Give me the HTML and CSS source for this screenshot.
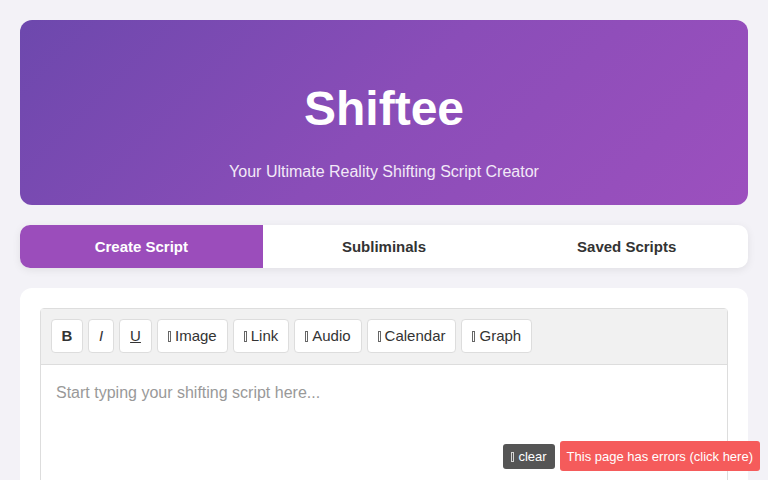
FILE: index.html
```html
<!DOCTYPE html>
<html>
<head>
<meta charset="utf-8">
<link rel="stylesheet" href="styles.css">
</head>
<body>
<div class="page">
  <header class="hero">
    <h1 class="title">Shiftee</h1>
    <p class="subtitle">Your Ultimate Reality Shifting Script Creator</p>
  </header>
  <nav class="tabs">
    <div class="tab active">Create Script</div>
    <div class="tab">Subliminals</div>
    <div class="tab">Saved Scripts</div>
  </nav>
  <section class="card">
    <div class="editor">
      <div class="toolbar">
        <button class="tb b">B</button>
        <button class="tb i">I</button>
        <button class="tb u">U</button>
        <button class="tb"><span class="ico"></span>Image</button>
        <button class="tb"><span class="ico"></span>Link</button>
        <button class="tb"><span class="ico"></span>Audio</button>
        <button class="tb"><span class="ico"></span>Calendar</button>
        <button class="tb"><span class="ico"></span>Graph</button>
      </div>
      <div class="content">Start typing your shifting script here...</div>
    </div>
  </section>
</div>
<div class="overlay">
  <button class="clear"><span class="ico small"></span>clear</button>
  <button class="errors">This page has errors (click here)</button>
</div>
</body>
</html>
```
FILE: styles.css
```css
* { box-sizing: border-box; }
html, body { margin: 0; padding: 0; }
body {
  background: #f3f2f7;
  font-family: "Liberation Sans", Arial, sans-serif;
  color: #333;
  overflow: hidden;
}
.page {
  padding: 20px;
  display: flex;
  flex-direction: column;
  gap: 20px;
}
.hero {
  height: 185px;
  border-radius: 12px;
  background: linear-gradient(135deg, #6d48ad 0%, #8a4db8 50%, #9c50be 100%);
  color: #fff;
  text-align: center;
  padding-top: 61px;
}
.title {
  margin: 0;
  font-size: 48px;
  line-height: 56px;
  font-weight: bold;
}
.subtitle {
  margin: 25px 0 0;
  font-size: 16px;
  line-height: 20px;
  color: #f2e9f7;
}
.tabs {
  display: grid;
  grid-template-columns: 1fr 1fr 1fr;
  height: 43px;
  background: #fff;
  border-radius: 10px;
  overflow: hidden;
  box-shadow: 0 2px 8px rgba(0,0,0,0.08);
}
.tab {
  display: flex;
  align-items: center;
  justify-content: center;
  font-weight: bold;
  font-size: 15px;
  color: #333;
}
.tab.active {
  background: #9b4dbb;
  color: #fff;
}
.card {
  background: #fff;
  border-radius: 12px;
  padding: 20px;
  height: 300px;
}
.editor {
  border: 1px solid #ddd;
  border-radius: 4px;
  height: 100%;
}
.toolbar {
  background: #f1f1f1;
  border-bottom: 1px solid #ddd;
  padding: 10px;
  display: flex;
  gap: 5px;
  height: 56px;
}
.tb {
  height: 34px;
  background: #fff;
  border: 1px solid #ddd;
  border-radius: 4px;
  padding: 0 10px;
  font-family: "Liberation Sans", Arial, sans-serif;
  font-size: 15px;
  line-height: 32px;
  color: #333;
}
.tb.b { font-weight: bold; width: 32px; padding: 0; text-align: center; }
.tb.i { font-style: italic; width: 26px; padding: 0; text-align: center; }
.tb.u { text-decoration: underline; width: 33px; padding: 0; text-align: center; }
.ico {
  display: inline-block;
  width: 3px;
  height: 11px;
  border: 1px solid currentColor;
  opacity: 0.75;
  margin-right: 4px;
  vertical-align: -1px;
}
.ico.small {
  height: 10px;
  margin-right: 4px;
}
.content {
  padding: 18px 15px;
  font-size: 16px;
  line-height: 20px;
  color: #999;
}
.overlay {
  position: fixed;
  right: 8px;
  bottom: 9px;
  display: flex;
  align-items: center;
  gap: 5px;
}
.clear {
  background: #555;
  color: #fff;
  border: none;
  border-radius: 3px;
  height: 25px;
  padding: 0 8px;
  font-family: "Liberation Sans", Arial, sans-serif;
  font-size: 13px;
}
.errors {
  background: #f55b5b;
  color: #fff;
  border: none;
  border-radius: 3px;
  height: 30px;
  padding: 0 7px;
  font-family: "Liberation Sans", Arial, sans-serif;
  font-size: 13px;
}
```
